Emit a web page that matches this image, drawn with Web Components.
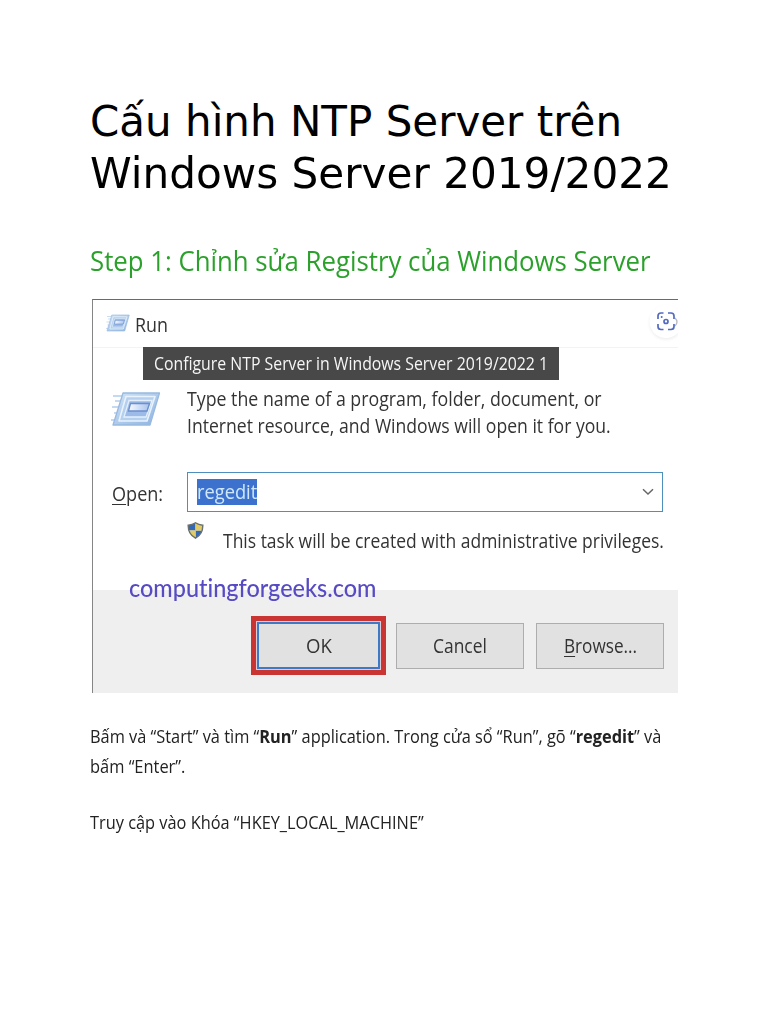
<!DOCTYPE html>
<html lang="vi">
<head>
<meta charset="utf-8">
<title>Cấu hình NTP Server</title>
<style>
html,body{margin:0;background:#fff}
body{font-family:"Open Sans","Noto Sans",sans-serif;color:#222}
</style>
</head>
<body>
<doc-page></doc-page>
<script>
const define = (name, html, init) => customElements.define(name, class extends HTMLElement {
  constructor() {
    super();
    const t = document.createElement('template');
    t.innerHTML = html;
    this.attachShadow({mode: 'open'}).append(t.content.cloneNode(true));
  }
  connectedCallback() { if (init) init(this); }
});

// One line of text, condensed or widened to the width in the "w" attribute.
define('fit-line', `<style>
:host{display:block;white-space:nowrap;flex:none}
span{display:inline-block;transform-origin:0 50%;white-space:nowrap}
</style><span><slot></slot></span>`, el => {
  const w = +el.getAttribute('w'), s = el.shadowRoot.querySelector('span');
  el.style.width = w + 'px';
  requestAnimationFrame(() => { s.style.transform = 'scaleX(' + w / s.offsetWidth + ')'; });
});

define('run-icon', `<style>:host{display:block;flex:none}svg{display:block;width:100%;height:100%}</style>
<svg viewBox="0 0 50 36" preserveAspectRatio="none">
<defs><linearGradient id="a" x1="0" y1="0" x2="1" y2="1"><stop stop-color="#d3e3f5"/><stop offset=".55" stop-color="#abc9ea"/><stop offset="1" stop-color="#8fb2e0"/></linearGradient>
<linearGradient id="b"><stop stop-color="#f7faff"/><stop offset="1" stop-color="#a9c3ee"/></linearGradient></defs>
<path d="M2 5h12M4 10h10M1 16h9M3 22h6M0 29h8" stroke="#c5daf0" stroke-width="1.8"/>
<path d="M12 2H48.500L39 34H2Z" fill="url(#a)" stroke="#98b9e0" stroke-width="1.300" stroke-linejoin="round"/>
<path d="M15 5.500H44L36 30H8Z" fill="#b4d0ee" stroke="#e9f3fd" stroke-width="1.600" stroke-linejoin="round"/>
<path d="M18 9.500H41L35 26H13Z" fill="#9dbbe8" stroke="#e3effb" stroke-width="1.300"/>
<path d="M19.500 12.500H38.500L36 20H17.500Z" fill="url(#b)" stroke="#6d8fca" stroke-width="1.300"/>
</svg>`);

define('lens-button', `<style>:host{display:block;width:31px;height:38px;overflow:hidden}svg{display:block}</style>
<svg width="31" height="38" viewBox="0 0 31 38"><defs><filter id="s" x="-30%" y="-30%" width="160%" height="160%"><feGaussianBlur stdDeviation="1.8"/></filter></defs>
<circle cx="19" cy="19" r="16.500" fill="#eee" filter="url(#s)"/><circle cx="19" cy="17.500" r="16.500" fill="#fff"/>
<path d="M28 14q4 4 0 8" fill="none" stroke="#bbb" stroke-width="1.300"/>
<g fill="none" stroke="#536bc0" stroke-width="1.700"><path d="M11 15v-3q0-3 3-3h2.500M21 9h3q3 0 3 3v3M27 20v2.500q0 3-3 3h-3M16.500 25.500H14q-3 0-3-3V20"/><circle cx="19" cy="17.500" r="2"/></g><circle cx="14.700" cy="13" r="1" fill="#536bc0"/></svg>`);

define('shield-icon', `<style>:host{display:block;width:17px;height:17px}svg{display:block}</style>
<svg width="17" height="17" viewBox="0 0 17 17"><defs><clipPath id="c"><path d="M8.500 .8Q11.500 3 15.800 3.200Q16 12 8.500 16.200Q1 12 1.200 3.200Q5.500 3 8.500 .8Z"/></clipPath></defs>
<g clip-path="url(#c)"><path fill="#3568b4" d="M0 0h8.500v8.500H0zM8.500 8.500H17V17H8.500z"/><path fill="#e3cb66" d="M8.500 0H17v8.500H8.500zM0 8.500h8.500V17H0z"/></g>
<path d="M8.500 .8Q11.500 3 15.800 3.200Q16 12 8.500 16.200Q1 12 1.200 3.200Q5.500 3 8.500 .8Z" fill="none" stroke="#69706f" stroke-width="1.400"/></svg>`);

define('dialog-button', `<style>
:host{display:flex;box-sizing:border-box;height:46px;width:128px;align-items:center;justify-content:center;background:#e1e1e1;border:1px solid #adadad;line-height:46px}
:host([primary]){width:135px;height:59px;border:5px solid #c93532;background:#e1e1e1;box-shadow:inset 0 0 0 1px #d9cdd8,inset 0 0 0 3px #3e79c5}
</style><slot></slot>`);

define('run-dialog', `<style>
:host{display:block;box-sizing:border-box;width:586px;height:394px;border-left:1.500px solid #858585;border-top:1px solid #6f666e;background:#fff;color:#333;font-size:19.500px;overflow:hidden;position:relative}
header{display:flex;box-sizing:border-box;height:48px;padding-left:13px;align-items:center;border-bottom:1px solid #f3f3f3}
header run-icon{width:24px;height:18px;margin-top:-1px}
header fit-line{margin:2px 0 0 5px}
lens-button{margin:-1px 0 0 auto}
.tip{position:absolute;left:50px;top:47px;width:416px;height:33px;box-sizing:border-box;padding-left:11px;background:#484848;color:#f6f6f6;font-size:18px;line-height:33px}
.info{display:flex;height:124px;box-sizing:border-box;padding:37px 0 0 18px;line-height:27px}
.info run-icon{width:50px;height:36px;margin-top:6px}
.info .t{margin-left:26px}
.open{display:flex;align-items:center;height:40px;padding-left:19px}
.open fit-line{margin-top:2px}
.field{display:flex;box-sizing:border-box;width:476px;height:40px;margin-left:24px;border:1.500px solid #4d8fbd;align-items:center;padding:0 8px 0 9px;justify-content:space-between}
.sel{background:#3c72cd;color:#cfe7fb;height:26px;line-height:26px;width:60px;margin-top:-1px}
.sel fit-line{margin:0}
.task{display:flex;padding:10px 0 0 94px;height:54px;box-sizing:border-box}
.task fit-line{margin:5px 0 0 19px;line-height:27px}
.mark{height:25px;padding:9px 0 0 36px;color:#574bc4;font:500 24px/25px Lato,sans-serif;position:relative;z-index:1}
.mark fit-line{font-variant-ligatures:none}
footer{display:flex;box-sizing:border-box;height:103px;margin-top:-10px;padding:26px 0 0 158px;background:#efefef;font-size:20px}
footer dialog-button{margin-top:7px}
footer dialog-button[primary]{margin-top:0}
.c{margin-left:10px}.b{margin-left:12px}
u{text-decoration-thickness:1px;text-underline-offset:3px}
</style>
<header><run-icon></run-icon><fit-line w="33">Run</fit-line><lens-button></lens-button></header>
<div class="tip"><fit-line w="394">Configure NTP Server in Windows Server 2019/2022 1</fit-line></div>
<div class="info"><run-icon></run-icon><div class="t"><fit-line w="415">Type the name of a program, folder, document, or</fit-line><fit-line w="424">Internet resource, and Windows will open it for you.</fit-line></div></div>
<div class="open"><fit-line w="51"><u>O</u>pen:</fit-line><div class="field"><div class="sel"><fit-line w="60">regedit</fit-line></div><svg width="12" height="8" viewBox="0 0 12 8"><path d="M1 1.200L6 6L11 1.200" fill="none" stroke="#666" stroke-width="1.500"/></svg></div></div>
<div class="task"><shield-icon></shield-icon><fit-line w="441">This task will be created with administrative privileges.</fit-line></div>
<div class="mark"><fit-line w="247">computingforgeeks.com</fit-line></div>
<footer><dialog-button primary><fit-line w="26">OK</fit-line></dialog-button><dialog-button class="c"><fit-line w="54">Cancel</fit-line></dialog-button><dialog-button class="b"><fit-line w="73"><u>B</u>rowse...</fit-line></dialog-button></footer>`);

define('doc-page', `<style>
:host{display:block;box-sizing:border-box;width:768px;height:1024px;padding:96px 0 0 90px;overflow:hidden}
h1{margin:0;font:400 42px/52px Verdana,"DejaVu Sans",sans-serif;color:#000}
h2{margin:37px 0 0;font-weight:400;font-size:26.500px;line-height:48px;color:#2ba12b}
run-dialog{margin:14px 0 0 2px}
p{margin:0;font-size:17.300px;line-height:30px;color:#222}
.p1{margin-top:29px}.p2{margin-top:26px}
</style>
<h1><fit-line w="532">Cấu hình NTP Server trên</fit-line><fit-line w="582">Windows Server 2019/2022</fit-line></h1>
<h2><fit-line w="561">Step 1: Chỉnh sửa Registry của Windows Server</fit-line></h2>
<run-dialog></run-dialog>
<p class="p1"><fit-line w="571">Bấm và “Start” và tìm “<b>Run</b>” application. Trong cửa sổ “Run”, gõ “<b>regedit</b>” và</fit-line><fit-line w="95">bấm “Enter”.</fit-line></p>
<p class="p2"><fit-line w="334">Truy cập vào Khóa “HKEY_LOCAL_MACHINE”</fit-line></p>`);
</script>
</body>
</html>
